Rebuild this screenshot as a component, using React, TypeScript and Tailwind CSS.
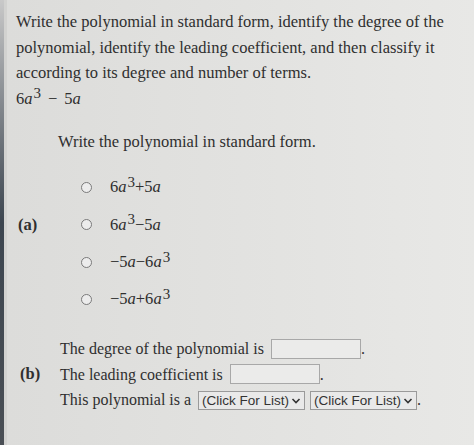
import React from "react";

const serif = { fontFamily: '"Liberation Serif", "Times New Roman", serif' };

function A() {
  return <span className="italic">a</span>;
}

function Radio({ children }: { children: React.ReactNode }) {
  return (
    <div className="flex items-center h-[37.3px]">
      <span className="w-[11px] h-[11px] rounded-full border-[1.5px] border-[#7a7a7a] bg-[#ececec]" />
      <span className="ml-[18px] text-[16.5px]">{children}</span>
    </div>
  );
}

function Sup({ children }: { children: React.ReactNode }) {
  return <sup className="text-[15px] relative top-[-0.35em] ml-[1px]">{children}</sup>;
}

function Select() {
  return (
    <span
      className="inline-flex items-center h-[19px] px-[3px] border border-[#9a9a9a] bg-[#e9e9e9] text-[13.5px] text-[#333] leading-none"
      style={{ fontFamily: '"Liberation Sans", Arial, sans-serif' }}
    >
      (Click For List)
      <svg width="10" height="8" viewBox="0 0 10 8" className="ml-[2px]">
        <path d="M1.5 2 L5 5.5 L8.5 2" fill="none" stroke="#333" strokeWidth="1.6" />
      </svg>
    </span>
  );
}

export default function App() {
  return (
    <div className="w-[474px] h-[445px] flex bg-[#e4e4e2] text-[#2f2f2f] overflow-hidden" style={serif}>
      <div className="w-[4px] h-full bg-gradient-to-b from-[#c9c9c9] via-[#3d4650] to-[#4a4f55]" />
      <div className="w-[3px] h-full bg-[#d2d2d0]" />
      <div className="flex-1 pl-[9px] pt-[9px] bg-gradient-to-r from-[#dcdcda] to-[#e8e8e6]">
        <p className="text-[16.5px] leading-[25.5px] w-[440px]">
          Write the polynomial in standard form, identify the degree of the polynomial, identify the leading
          coefficient, and then classify it according to its degree and number of terms.
        </p>
        <div className="text-[16.5px] leading-[25.5px]">
          6<A />
          <Sup>3</Sup>
          <span className="mx-[7px]">−</span>5<A />
        </div>
        <div className="flex mt-[18px]">
          <div className="w-[42px] pl-[2px] font-bold text-[16.5px] mt-[84px]">(a)</div>
          <div>
            <div className="text-[16.5px] leading-[25px]">Write the polynomial in standard form.</div>
            <div className="ml-[23px] mt-[15px]">
              <Radio>
                6<A />
                <Sup>3</Sup>+5<A />
              </Radio>
              <Radio>
                6<A />
                <Sup>3</Sup>−5<A />
              </Radio>
              <Radio>
                −5<A />−6<A />
                <Sup>3</Sup>
              </Radio>
              <Radio>
                −5<A />+6<A />
                <Sup>3</Sup>
              </Radio>
            </div>
          </div>
        </div>
        <div className="flex items-center mt-[18px]">
          <div className="w-[44px] pl-[4px] font-bold text-[16.5px]">(b)</div>
          <div className="text-[16px] leading-[25.5px]">
            <div className="flex items-center">
              The degree of the polynomial is
              <span className="ml-[7px] inline-block w-[90px] h-[20px] border border-[#a8a8a8] bg-[#ebebea]" />
              <span>.</span>
            </div>
            <div className="flex items-center">
              The leading coefficient is
              <span className="ml-[7px] inline-block w-[90px] h-[20px] border border-[#a8a8a8] bg-[#ebebea]" />
              <span>.</span>
            </div>
            <div className="flex items-center">
              This polynomial is a
              <span className="ml-[7px]"><Select /></span>
              <span className="ml-[5px]"><Select /></span>
              <span>.</span>
            </div>
          </div>
        </div>
      </div>
    </div>
  );
}
